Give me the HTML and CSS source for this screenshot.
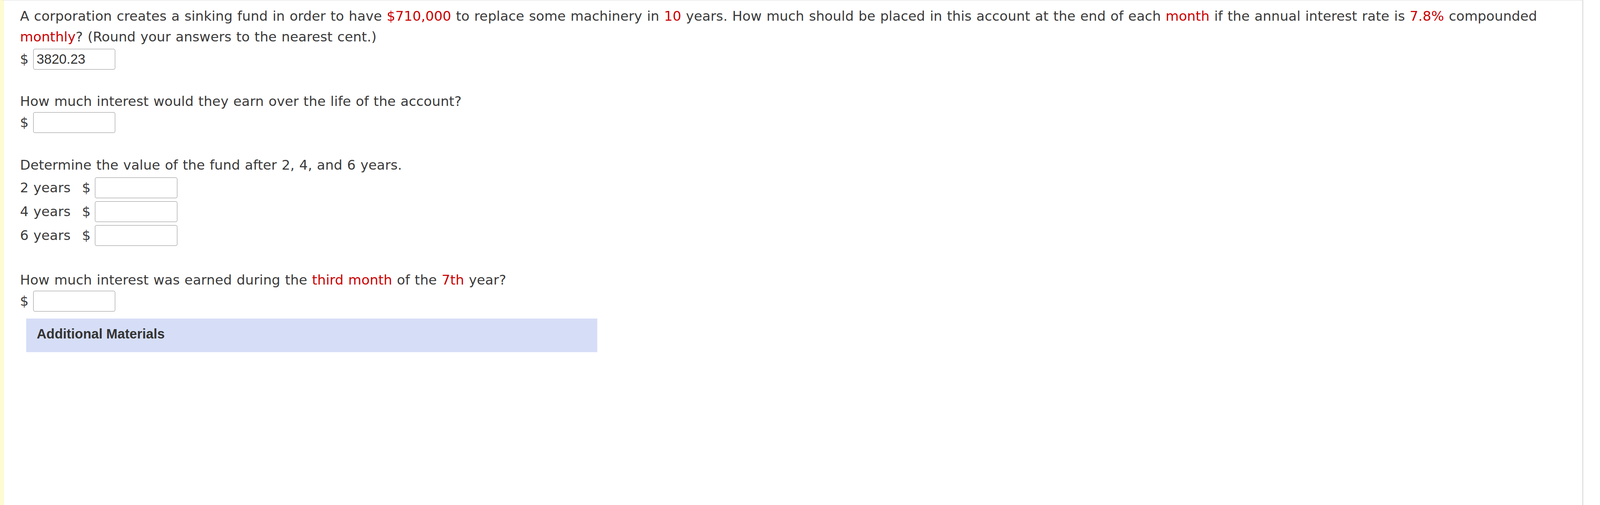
FILE: index.html
```html
<!DOCTYPE html>
<html>
  <head>
    <title>Sinking Fund</title>
    <link rel="stylesheet" href="styles.css">
  </head>
  <body>
    <div class="question-box">
      <p class="question">A corporation creates a sinking fund in order to have <span class="red">$710,000</span> to replace some machinery in <span class="red">10</span> years. How much should be placed in this account at the end of each <span class="red">month</span> if the annual interest rate is <span class="red">7.8%</span> compounded <span class="red">monthly</span>? (Round your answers to the nearest cent.)</p>
      <div class="answer-row row-first">
        <span class="dollar">$</span>
        <input class="answer" value="3820.23">
      </div>

      <p class="question second">How much interest would they earn over the life of the account?</p>
      <div class="answer-row row-tight">
        <span class="dollar">$</span>
        <input class="answer">
      </div>

      <p class="question third">Determine the value of the fund after 2, 4, and 6 years.</p>
      <div class="year-rows">
        <div class="answer-row">
          <span class="year-label">2 years</span>
          <span class="dollar">$</span>
          <input class="answer">
        </div>
        <div class="answer-row">
          <span class="year-label">4 years</span>
          <span class="dollar">$</span>
          <input class="answer">
        </div>
        <div class="answer-row">
          <span class="year-label">6 years</span>
          <span class="dollar">$</span>
          <input class="answer">
        </div>
      </div>

      <p class="question fourth">How much interest was earned during the <span class="red">third month</span> of the <span class="red">7th</span> year?</p>
      <div class="answer-row row-tight">
        <span class="dollar">$</span>
        <input class="answer">
      </div>

      <div class="materials">
        <h4>Additional Materials</h4>
      </div>
    </div>
  </body>
</html>
```

FILE: styles.css
```css
/* whole page scales with the window width, 1rem = 51px on a 6052px wide window */
html{
  font-size: 0.8427vw;
}
body{
  margin: 0;
  background-color: white;
  font-family: "DejaVu Sans", Verdana, sans-serif;
  font-size: 1rem;
  color: #3b3b3b;
}

.question-box{
  box-sizing: border-box;
  height: 100vh;
  overflow: hidden;
  margin-right: 1.235rem;
  border-left: 0.314rem solid #fdfbd0;
  border-top: 0.04rem solid #dcdcdc;
  border-right: 0.059rem solid #d4d4d4;
  padding: 0.412rem 1.176rem 0rem 1.196rem;
  letter-spacing: 0.002em;
  word-spacing: 0.032em;
}

.question{
  margin: 0;
  line-height: 1.53rem;
}
.second{
  margin-top: 1.588rem;
}
.third{
  margin-top: 1.627rem;
}
.fourth{
  margin-top: 1.765rem;
}
.red{
  color: #cc0000;
}

.answer-row{
  display: flex;
  align-items: center;
  line-height: 1.53rem;
}
.row-first{
  margin-top: 0.118rem;
}
.row-tight{
  margin-top: 0.02rem;
}
.year-rows{
  display: flex;
  flex-direction: column;
  row-gap: 0.216rem;
  margin-top: 0.137rem;
}

.dollar{
  margin-right: 0.33rem;
}
.year-label{
  width: 4.6rem;
}

.answer{
  box-sizing: border-box;
  width: 6.098rem;
  height: 1.549rem;
  margin: 0;
  padding: 0rem 0.235rem;
  border: 0.04rem solid #8d8d8d;
  border-radius: 0.118rem;
  font-family: "Liberation Sans", Arial, sans-serif;
  font-size: 1rem;
  letter-spacing: normal;
  color: #333;
  background-color: white;
}
.answer:focus{
  outline: none;
}

.materials{
  box-sizing: border-box;
  width: 42.35rem;
  margin-top: 0.53rem;
  margin-left: 0.451rem;
  padding: 0.569rem 0.784rem 0.784rem 0.784rem;
  background-color: #d6def7;
  letter-spacing: normal;
  word-spacing: normal;
}
.materials h4{
  margin: 0;
  font-family: "Liberation Sans", Arial, sans-serif;
  font-size: 1rem;
  font-weight: bold;
  color: #333;
}
```
